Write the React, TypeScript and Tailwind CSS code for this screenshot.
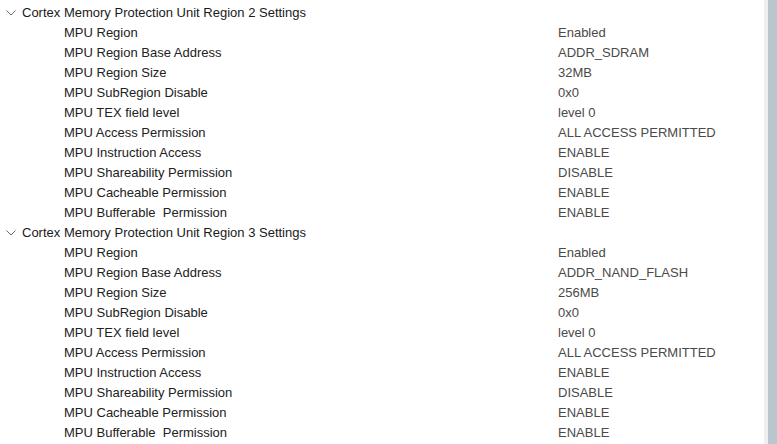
const fields = [
  'MPU Region',
  'MPU Region Base Address',
  'MPU Region Size',
  'MPU SubRegion Disable',
  'MPU TEX field level',
  'MPU Access Permission',
  'MPU Instruction Access',
  'MPU Shareability Permission',
  'MPU Cacheable Permission',
  'MPU Bufferable  Permission',
];

const sections = [
  {
    title: 'Cortex Memory Protection Unit Region 2 Settings',
    values: ['Enabled', 'ADDR_SDRAM', '32MB', '0x0', 'level 0', 'ALL ACCESS PERMITTED', 'ENABLE', 'DISABLE', 'ENABLE', 'ENABLE'],
  },
  {
    title: 'Cortex Memory Protection Unit Region 3 Settings',
    values: ['Enabled', 'ADDR_NAND_FLASH', '256MB', '0x0', 'level 0', 'ALL ACCESS PERMITTED', 'ENABLE', 'DISABLE', 'ENABLE', 'ENABLE'],
  },
];

const Chevron = () => (
  <svg width="10" height="6" viewBox="0 0 10 6" className="shrink-0">
    <path d="M0.5 0.5 L5 5 L9.5 0.5" fill="none" stroke="#6b6b6b" strokeWidth="1" />
  </svg>
);

export default function App() {
  return (
    <div className="w-[777px] h-[444px] overflow-hidden bg-white flex font-['Liberation_Sans',Arial,sans-serif] text-[13px]">
      <div className="flex-1 pt-[3px]">
        {sections.map(s => (
          <div key={s.title}>
            <div className="h-5 flex items-center pl-[6px] text-[#1a1a1a]">
              <Chevron />
              <span className="ml-[6px]">{s.title}</span>
            </div>
            {fields.map((f, i) => (
              <div key={f} className="h-5 flex items-center">
                <span className="w-[558px] pl-[64px] text-[#222] whitespace-pre">{f}</span>
                <span className="text-[#4a4a4a]">{s.values[i]}</span>
              </div>
            ))}
          </div>
        ))}
      </div>
      <div className="w-[4px] bg-[#efefef]" />
      <div className="w-[9px] bg-[#b9c6cd]" />
    </div>
  );
}
